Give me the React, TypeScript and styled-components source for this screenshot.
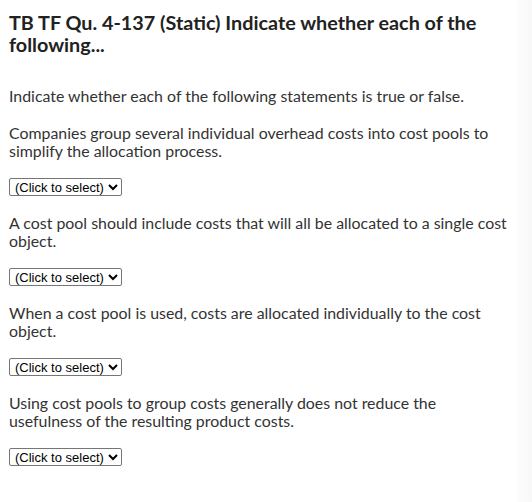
import styled, { createGlobalStyle } from 'styled-components';

const GlobalStyle = createGlobalStyle`
  html, body {
    margin: 0;
    padding: 0;
    background: #fff;
  }
  body {
    font-family: Lato, "Liberation Sans", sans-serif;
  }
`;

const Page = styled.div`
  display: flex;
  min-height: 502px;
`;
const Content = styled.div`
  flex: 1;
  padding: 11px 9px 0;
  color: #333;
`;
const ScrollTrack = styled.div`
  width: 15px;
  background: linear-gradient(to right, #fdfdfd, #f7f7f7);
`;
const Title = styled.h2`
  margin: 0 0 32px;
  font-size: 19.8px;
  line-height: 22px;
  font-weight: 700;
  color: #222;
`;
const Intro = styled.p`
  margin: 0 0 19px;
  font-size: 15.9px;
  line-height: 18px;
`;
const Statement = styled.div`
  display: flex;
  flex-direction: column;
  align-items: flex-start;
  gap: 18px;
  margin-bottom: 18px;
`;
const StatementText = styled.p`
  margin: 0;
  font-size: 15.9px;
  line-height: 18px;
`;
const Picker = styled.select`
  font-family: "Liberation Sans", Arial, sans-serif;
  font-size: 13px;
  height: 18px;
  color: #000;
  border: 1px solid #767676;
  border-radius: 2px;
  background: #fff;
  padding: 0 1px;
`;

const statements = [
  'Companies group several individual overhead costs into cost pools to simplify the allocation process.',
  'A cost pool should include costs that will all be allocated to a single cost object.',
  'When a cost pool is used, costs are allocated individually to the cost object.',
  'Using cost pools to group costs generally does not reduce the usefulness of the resulting product costs.',
];

function App() {
  return (
    <>
      <GlobalStyle />
      <Page>
        <Content>
          <Title>TB TF Qu. 4-137 (Static) Indicate whether each of the following...</Title>
          <Intro>Indicate whether each of the following statements is true or false.</Intro>
          {statements.map((s) => (
            <Statement key={s}>
              <StatementText>{s}</StatementText>
              <Picker defaultValue="">
                <option value="">(Click to select)</option>
                <option value="true">True</option>
                <option value="false">False</option>
              </Picker>
            </Statement>
          ))}
        </Content>
        <ScrollTrack />
      </Page>
    </>
  );
}

export default App;
